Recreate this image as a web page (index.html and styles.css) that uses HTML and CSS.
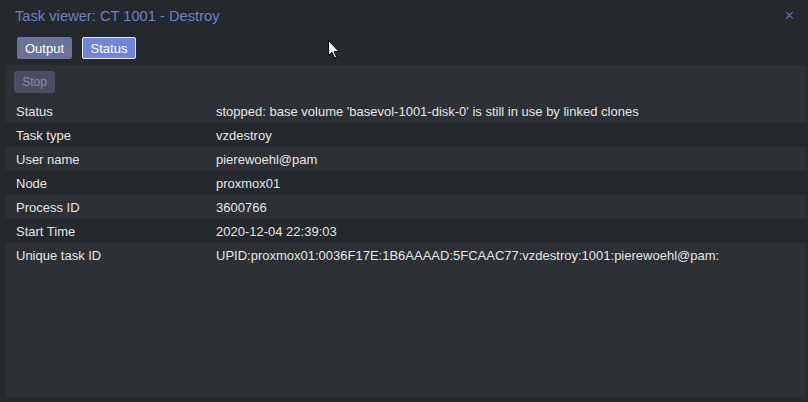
FILE: index.html
```html
<!DOCTYPE html>
<html lang="en">
<head>
  <meta charset="UTF-8" />
  <title>Task viewer</title>
  <link rel="stylesheet" href="styles.css">
</head>
<body>
  <div class="window">
    <div class="header">
      <div class="title-row">
        <span class="title">Task viewer: CT 1001 - Destroy</span>
        <span class="close">&#x2715;</span>
      </div>
      <div class="tabs">
        <button class="tab tab-output">Output</button>
        <button class="tab tab-status active">Status</button>
      </div>
    </div>
    <div class="content">
      <div class="toolbar">
        <button class="stop" disabled>Stop</button>
      </div>
      <div class="grid">
        <div class="row"><span class="key">Status</span><span class="val">stopped: base volume 'basevol-1001-disk-0' is still in use by linked clones</span></div>
        <div class="row"><span class="key">Task type</span><span class="val">vzdestroy</span></div>
        <div class="row"><span class="key">User name</span><span class="val">pierewoehl@pam</span></div>
        <div class="row"><span class="key">Node</span><span class="val">proxmox01</span></div>
        <div class="row"><span class="key">Process ID</span><span class="val">3600766</span></div>
        <div class="row"><span class="key">Start Time</span><span class="val">2020-12-04 22:39:03</span></div>
        <div class="row"><span class="key">Unique task ID</span><span class="val">UPID:proxmox01:0036F17E:1B6AAAAD:5FCAAC77:vzdestroy:1001:pierewoehl@pam:</span></div>
      </div>
    </div>
    <svg class="cursor" width="12" height="19" viewBox="0 0 12 19">
      <path d="M0.5 0.5 L0.5 15.5 L4 12.2 L6.6 18 L8.6 17.1 L6.1 11.5 L10.8 11.5 Z" fill="#fff" stroke="#000" stroke-width="1"/>
    </svg>
  </div>
</body>
</html>
```

FILE: styles.css
```css
* { margin: 0; padding: 0; box-sizing: border-box; }
body {
  background: #27292d;
  font-family: "Liberation Sans", Arial, sans-serif;
  font-size: 13px;
  color: #e6e6e6;
  width: 808px;
  height: 402px;
  overflow: hidden;
}
.window { position: relative; height: 402px; }
.header {
  background: #25282c;
  height: 65px;
  padding: 6px 0 0 15px;
}
.title-row {
  display: flex;
  justify-content: space-between;
  align-items: center;
  height: 20px;
}
.title { color: #6e80c6; font-size: 14.7px; }
.close { color: #5b6bb3; font-size: 13px; margin-right: 13px; margin-top: -2px; }
.tabs { display: flex; gap: 10px; margin-top: 11px; padding-left: 2px; }
.tab {
  font-family: inherit;
  font-size: 13px;
  color: #fff;
  background: #6a7299;
  border: 1px solid #6a7299;
  border-radius: 2px;
  height: 22px;
  padding: 0;
}
.tab-output { width: 55px; }
.tab-status { width: 54px; }
.tab.active { background: #7085d6; border-color: #e8ecff; }
.content {
  background: #2d3035;
  margin: 0 2px 0 6px;
  height: 332px;
}
.toolbar { height: 34px; padding: 6px 0 0 8px; }
.stop {
  font-family: inherit;
  font-size: 12px;
  color: #868b99;
  background: #4a4e60;
  border: none;
  border-radius: 3px;
  width: 41px;
  height: 22px;
}
.row {
  display: flex;
  height: 24px;
  align-items: center;
  padding-left: 10px;
}
.row:nth-child(even) { background: #25282c; }
.key { width: 200px; }
.val { white-space: nowrap; }
.cursor { position: absolute; left: 328px; top: 40px; }
```
